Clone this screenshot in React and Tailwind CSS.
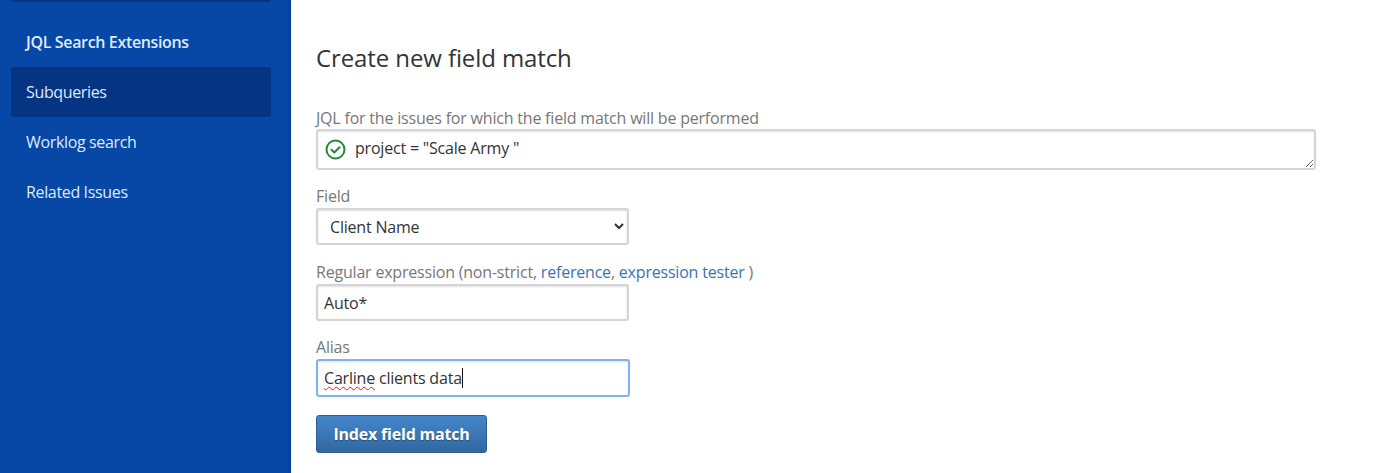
const font = { fontFamily: '"Open Sans", "Noto Sans", sans-serif' };

const fieldClass =
  "block w-[313px] rounded-[3px] border-2 border-[#d4d4d4] bg-white text-[16px] text-[#333] shadow-[inset_0_1px_2px_rgba(0,0,0,0.12)] outline-none";

function NavItem({ children, active, bold }) {
  return (
    <div
      className={`flex h-[50px] items-center rounded-[3px] px-[15px] text-[16px] tracking-[-0.35px] text-[#deebff] ${
        active ? "bg-[#053582]" : ""
      } ${bold ? "font-semibold" : ""}`}
    >
      {children}
    </div>
  );
}

function Label({ children }) {
  return <div className="h-[24px] text-[16px] leading-[24px] tracking-[-0.2px] text-[#777]">{children}</div>;
}

export default function App() {
  return (
    <div style={font} className="flex h-[473px] w-[1379px] overflow-hidden bg-white">
      <aside className="h-full w-[291px] shrink-0 border-r-[3px] border-[#06429c] bg-[#0747a6] pl-[11px] pr-[17px]">
        <div className="h-[2px] rounded-b-[3px] bg-[#053582]" />
        <div className="mt-[15px]">
          <NavItem bold>JQL Search Extensions</NavItem>
          <NavItem active>Subqueries</NavItem>
          <NavItem>Worklog search</NavItem>
          <NavItem>Related Issues</NavItem>
        </div>
      </aside>
      <main className="flex-1 pl-[25px]">
        <h1 className="mt-[41px] h-[33px] text-[24px] leading-[33px] tracking-[-0.1px] text-[#333]">
          Create new field match
        </h1>
        <div className="mt-[32px]">
          <Label>JQL for the issues for which the field match will be performed</Label>
          <div className="relative -mt-[1px] h-[41px] w-[1000px]">
            <textarea
              readOnly
              value={'project = "Scale Army "'}
              className={`${fieldClass} h-[41px] !w-[1000px] resize-y pl-[37px] pt-[5px] leading-[24px] tracking-[-0.2px]`}
            />
            <svg
              className="absolute left-[9px] top-[10px]"
              width="21"
              height="21"
              viewBox="0 0 21 21"
              fill="none"
              stroke="#1f8a3c"
              strokeWidth="2"
            >
              <circle cx="10.5" cy="10.5" r="9" />
              <path d="M6.5 10.8l2.8 2.7 5.2-5.2" strokeLinecap="round" strokeLinejoin="round" />
            </svg>
          </div>
          <div className="mt-[14px]">
            <Label>Field</Label>
          </div>
          <select
            defaultValue="Client Name"
            className={`${fieldClass} -mt-[0px] h-[37px] pl-[8px] tracking-[-0.2px]`}
          >
            <option>Client Name</option>
          </select>
          <div className="mt-[15px]">
            <Label>
              Regular expression (non-strict, <span className="text-[#3b73af]">reference</span>,{" "}
              <span className="text-[#3b73af]">expression tester</span> )
            </Label>
          </div>
          <input
            readOnly
            value="Auto*"
            className={`${fieldClass} h-[37px] px-[6px] tracking-[-0.2px]`}
          />
          <div className="mt-[14px]">
            <Label>Alias</Label>
          </div>
          <div className="flex h-[38px] w-[314px] items-center rounded-[3px] border-2 border-[#82b1f5] bg-white px-[6px] text-[16px] tracking-[-0.2px] text-[#333] shadow-[inset_0_1px_2px_rgba(0,0,0,0.1)]">
            <span className="underline decoration-[#e02020] decoration-wavy decoration-[1px] underline-offset-[2px]">
              Carline
            </span>
            <span className="whitespace-pre"> clients data</span>
            <span className="ml-[0px] h-[20px] w-[1px] bg-[#111]" />
          </div>
          <button className="mt-[18px] flex h-[38px] w-[171px] items-center justify-center rounded-[3px] border border-[#2b5f94] bg-gradient-to-b from-[#4487cc] to-[#30689f] text-[16px] font-bold tracking-[-0.2px] text-white [text-shadow:0_1px_1px_rgba(0,0,0,0.3)]">
            Index field match
          </button>
        </div>
      </main>
    </div>
  );
}
